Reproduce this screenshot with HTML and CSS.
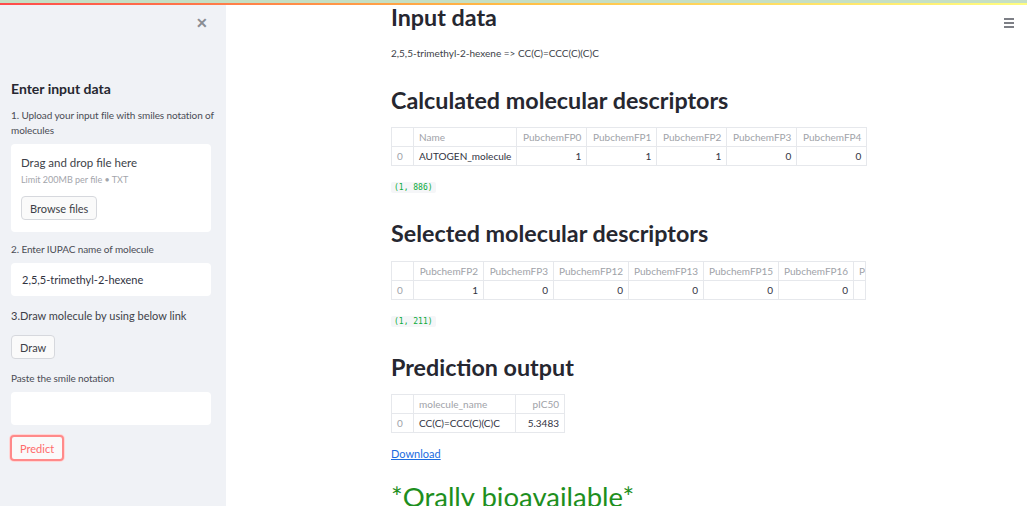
FILE: index.html
```html
<!DOCTYPE html>
<html lang="en">
<head>
  <meta charset="UTF-8" />
  <title>Bioavailability prediction</title>
  <link rel="stylesheet" href="styles.css">
</head>
<body>
  <div class="decoration"></div>
  <div class="app">
    <aside class="sidebar">
      <div class="close">&#x2715;</div>

      <h3>Enter input data</h3>

      <label>1. Upload your input file with smiles notation of molecules</label>
      <div class="uploader">
        <div class="drop">Drag and drop file here</div>
        <div class="limit">Limit 200MB per file • TXT</div>
        <button class="btn browse">Browse files</button>
      </div>

      <label>2. Enter IUPAC name of molecule</label>
      <div class="field">2,5,5-trimethyl-2-hexene</div>

      <p class="hint">3.Draw molecule by using below link</p>
      <button class="btn draw">Draw</button>

      <label class="paste">Paste the smile notation</label>
      <div class="field empty"></div>

      <button class="btn predict">Predict</button>
    </aside>

    <main class="main">
      <div class="menu">
        <span></span><span></span><span></span>
      </div>

      <h1 class="first">Input data</h1>
      <p class="smiles">2,5,5-trimethyl-2-hexene =&gt; CC(C)=CCC(C)(C)C</p>

      <h1>Calculated molecular descriptors</h1>
      <table class="frame">
        <tr>
          <th class="idx"></th><th class="l w102">Name</th><th class="w70">PubchemFP0</th><th class="w70">PubchemFP1</th><th class="w70">PubchemFP2</th><th class="w70">PubchemFP3</th><th class="w70">PubchemFP4</th>
        </tr>
        <tr>
          <td class="idx">0</td><td class="l">AUTOGEN_molecule</td><td>1</td><td>1</td><td>1</td><td>0</td><td>0</td>
        </tr>
      </table>
      <code class="shape">(1, 886)</code>

      <h1>Selected molecular descriptors</h1>
      <div class="scroll">
        <table class="frame wide">
          <tr>
            <th class="idx"></th><th class="w70">PubchemFP2</th><th class="w70">PubchemFP3</th><th class="w75">PubchemFP12</th><th class="w75">PubchemFP13</th><th class="w75">PubchemFP15</th><th class="w75">PubchemFP16</th><th class="w75">PubchemFP17</th>
          </tr>
          <tr>
            <td class="idx">0</td><td>1</td><td>0</td><td>0</td><td>0</td><td>0</td><td>0</td><td>0</td>
          </tr>
        </table>
      </div>
      <code class="shape">(1, 211)</code>

      <h1>Prediction output</h1>
      <table class="frame">
        <tr>
          <th class="idx"></th><th class="l w102">molecule_name</th><th class="w49">pIC50</th>
        </tr>
        <tr>
          <td class="idx">0</td><td class="l">CC(C)=CCC(C)(C)C</td><td>5.3483</td>
        </tr>
      </table>
      <a class="download" href="#">Download</a>

      <h2 class="verdict">*Orally bioavailable*</h2>
    </main>
  </div>
</body>
</html>
```

FILE: styles.css
```css
body {
  margin: 0;
  font-family: "Lato", "Open Sans", sans-serif;
  color: #262730;
  background: #fff;
  overflow: hidden;
}
.decoration {
  height: 5px;
  background: linear-gradient(90deg, #ff4b4b, #ffbd45, #fffd80);
  border-top: 3px solid #c5dfc4;
  box-sizing: border-box;
}
.app {
  display: flex;
  height: 501px;
}
.sidebar {
  width: 226px;
  flex-shrink: 0;
  background: #f0f2f6;
  padding: 0 15px 0 11px;
  box-sizing: border-box;
  position: relative;
}
.close {
  position: absolute;
  right: 18px;
  top: 9px;
  font-size: 14px;
  font-weight: bold;
  color: #8a8d93;
}
.sidebar h3 {
  margin: 75px 0 0;
  font-size: 14px;
  font-weight: 700;
  line-height: 18px;
}
.sidebar label {
  display: block;
  font-size: 10px;
  letter-spacing: -0.1px;
  color: #4a4c55;
  line-height: 15px;
  margin-top: 10px;
  margin-bottom: 6px;
  margin-right: -6px;
}
.uploader {
  background: #fff;
  border-radius: 4px;
  padding: 11px 10px 12px;
}
.drop {
  font-size: 11.5px;
  line-height: 15px;
  color: #3d3f48;
}
.limit {
  font-size: 9px;
  color: #a3a5ab;
  margin-top: 3px;
  line-height: 13px;
}
.btn {
  font-family: inherit;
  background: #fafafa;
  border: 1px solid #d6d8dd;
  border-radius: 4px;
  font-size: 11px;
  color: #3d3f48;
  padding: 0 8px;
  height: 24px;
  margin-top: 4px;
  display: block;
}
.browse {
  margin-top: 10px;
}
.field {
  background: #fff;
  border-radius: 4px;
  height: 33px;
  line-height: 33px;
  padding: 0 11px;
  font-size: 11px;
  color: #31333f;
}
.hint {
  font-size: 11px;
  color: #3d3f48;
  margin: 12px 0 0;
  line-height: 15px;
}
.draw {
  margin-top: 12px;
}
.sidebar .paste {
  margin-top: 12px;
}
.predict {
  margin-top: 10px;
  margin-left: -1px;
  height: 26px;
  padding: 0 8px;
  color: #ff6b6b;
  border: 2px solid #ff8a8a;
  box-shadow: 0 0 0 1px #ffd6d6;
  background: #fafafa;
}
.main {
  flex: 1;
  padding-left: 165px;
  position: relative;
}
.menu {
  position: absolute;
  right: 13px;
  top: 13px;
  width: 10px;
  display: flex;
  flex-direction: column;
  gap: 2px;
}
.menu span {
  height: 2px;
  background: #7d7f86;
}
.main h1 {
  font-size: 23.3px;
  font-weight: 700;
  margin: 0;
  line-height: 30px;
  color: #262730;
}
.main h1.first {
  margin-top: -3px;
}
.smiles {
  font-size: 10px;
  color: #3d3f48;
  margin: 15px 0 26px;
}
.frame {
  border-collapse: collapse;
  table-layout: fixed;
  font-size: 10px;
  margin-top: 12px;
}
.scroll {
  width: 474px;
  overflow: hidden;
  margin-top: 13px;
  border-right: 1px solid #e6e8ec;
}
.scroll .frame {
  margin-top: 0;
}
.frame.wide {
  width: 538px;
}
.frame th, .frame td {
  border: 1px solid #e6e8ec;
  height: 18px;
  padding: 0 5px;
  text-align: right;
  white-space: nowrap;
  overflow: hidden;
}
.frame th {
  font-weight: normal;
  color: #a0a2a8;
}
.frame td {
  color: #31333f;
}
.frame .l {
  text-align: left;
}
.frame .idx {
  width: 11px;
  text-align: left;
  color: #a0a2a8;
}
.w102 { width: 91px; }
.w70 { width: 59px; }
.w75 { width: 64px; }
.w49 { width: 38px; }
.shape {
  display: inline-block;
  font-family: "DejaVu Sans Mono", monospace;
  font-size: 8px;
  color: #09ab3b;
  background: #f5f6f8;
  padding: 1px 3px;
  margin: 16px 0 25px;
  border-radius: 2px;
}
.download {
  display: block;
  font-size: 11px;
  color: #1c6ce0;
  margin: 14px 0 19px;
}
.main h2.verdict {
  font-size: 27.5px;
  font-weight: normal;
  color: #1e8f1e;
  margin: 0;
  line-height: 36px;
}
```
